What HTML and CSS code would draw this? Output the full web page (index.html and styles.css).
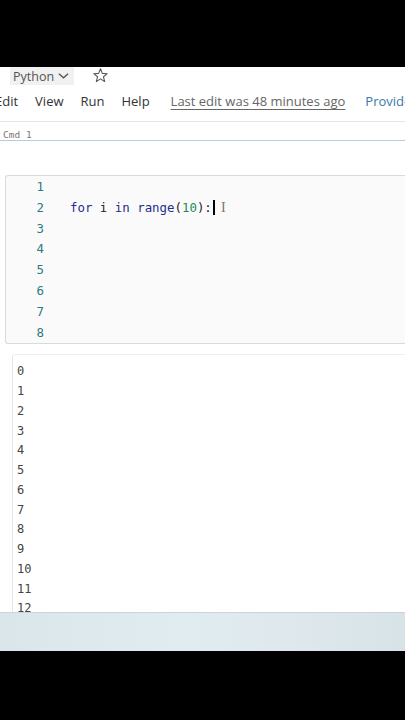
FILE: index.html
```html
<!DOCTYPE html>
<html lang="en">

<head>
    <meta charset="UTF-8">
    <meta name="viewport" content="width=device-width, initial-scale=1.0">
    <title>Notebook</title>
    <link rel="stylesheet" href="styles.css">
</head>

<body>

    <div class="screen">

        <div class="app">

            <div class="title-row">
                <span class="lang-pill">Python
                    <svg class="chevron" viewBox="0 0 12 8" width="11" height="8">
                        <path d="M1 1.5 L6 6 L11 1.5" fill="none" stroke="#555" stroke-width="1.4" />
                    </svg>
                </span>
                <svg class="star" viewBox="0 0 24 24" width="17" height="17">
                    <path d="M12 2.5 L14.6 9 L21.5 9.4 L16.2 13.8 L17.9 20.6 L12 16.8 L6.1 20.6 L7.8 13.8 L2.5 9.4 L9.4 9 Z"
                        fill="none" stroke="#555" stroke-width="1.5" stroke-linejoin="round" />
                </svg>
            </div>

            <div class="menu-row">
                <span class="menu-item edit">Edit</span>
                <span class="menu-item">View</span>
                <span class="menu-item">Run</span>
                <span class="menu-item">Help</span>
                <span class="last-edit">Last edit was 48 minutes ago</span>
                <span class="provider">Provide feedback</span>
            </div>

            <div class="cmd-row">Cmd 1</div>

            <div class="editor">
                <div class="line"><span class="num">1</span><span class="code"></span></div>
                <div class="line"><span class="num">2</span><span class="code"><span class="kw">for</span> i <span class="kw">in</span> <span class="kw">range</span>(<span class="nr">10</span>):<span class="caret"></span><span class="ibeam">I</span></span></div>
                <div class="line"><span class="num">3</span><span class="code"></span></div>
                <div class="line"><span class="num">4</span><span class="code"></span></div>
                <div class="line"><span class="num">5</span><span class="code"></span></div>
                <div class="line"><span class="num">6</span><span class="code"></span></div>
                <div class="line"><span class="num">7</span><span class="code"></span></div>
                <div class="line"><span class="num">8</span><span class="code"></span></div>
            </div>

            <div class="output">
                <div>0</div>
                <div>1</div>
                <div>2</div>
                <div>3</div>
                <div>4</div>
                <div>5</div>
                <div>6</div>
                <div>7</div>
                <div>8</div>
                <div>9</div>
                <div>10</div>
                <div>11</div>
                <div>12</div>
            </div>

        </div>

        <div class="bottom-bar"></div>

    </div>

</body>

</html>
```

FILE: styles.css
```css
html,
body {
    margin: 0;
    padding: 0;
    height: 100%;
    background: #000;
    font-family: "Open Sans", "Noto Sans", sans-serif;
    overflow: hidden;
}

.screen {
    display: flex;
    flex-direction: column;
    width: 405px;
    height: 720px;
    padding-top: 67px;
    box-sizing: border-box;
}

.app {
    height: 545px;
    background: #fff;
    overflow: hidden;
    display: flex;
    flex-direction: column;
    flex-shrink: 0;
}

.title-row {
    display: flex;
    align-items: center;
    height: 18px;
    padding-left: 10px;
    gap: 18px;
    flex-shrink: 0;
}

.lang-pill {
    display: flex;
    align-items: center;
    gap: 4px;
    height: 18px;
    padding: 0 5px 0 3px;
    background: #f1f1f1;
    color: #555;
    font-size: 12.5px;
}

.star {
    margin-top: -1px;
}

.menu-row {
    display: flex;
    align-items: flex-start;
    height: 37px;
    padding-top: 5px;
    box-sizing: border-box;
    line-height: 22px;
    white-space: nowrap;
    font-size: 13px;
    color: #333;
    border-bottom: 1px solid #e4e4e4;
    flex-shrink: 0;
}

.menu-item {
    margin-right: 17px;
}

.menu-item.edit {
    margin-left: -5px;
}

.last-edit {
    margin-left: 4px;
    color: #666;
    text-decoration: underline;
    text-underline-offset: 3px;
}

.provider {
    margin-left: 20px;
    color: #3a78a8;
}

.cmd-row {
    height: 19px;
    padding: 7px 0 0 3px;
    box-sizing: border-box;
    font-family: "DejaVu Sans Mono", monospace;
    font-size: 9.5px;
    line-height: 12px;
    color: #777;
    border-bottom: 1px solid #b9cbd4;
    flex-shrink: 0;
}

.editor {
    margin: 34px 0 0 5px;
    padding-top: 1px;
    background: #fafafa;
    border: 1px solid #dadada;
    border-right: none;
    border-radius: 3px 0 0 3px;
    font-family: "DejaVu Sans Mono", monospace;
    font-size: 12.4px;
    flex-shrink: 0;
}

.line {
    display: flex;
    height: 20.8px;
    line-height: 20.8px;
}

.num {
    width: 38px;
    text-align: right;
    color: #2d7b7e;
}

.code {
    position: relative;
    padding-left: 26px;
    color: #222;
}

.kw {
    color: #1f2d8f;
}

.nr {
    color: #1a8a5a;
}

.caret {
    display: inline-block;
    width: 2px;
    height: 15px;
    margin-left: 1px;
    vertical-align: -3px;
    background: #000;
}

.ibeam {
    position: absolute;
    left: 177px;
    top: 0;
    font-family: "Liberation Serif", serif;
    font-size: 14px;
    color: #777;
}

.output {
    margin: 10px 0 0 12px;
    padding: 7px 0 0 4px;
    border-left: 1px solid #e6e6e6;
    border-top: 1px solid #eeeeee;
    border-radius: 4px 0 0 0;
    font-family: "DejaVu Sans Mono", monospace;
    font-size: 12px;
    line-height: 19.75px;
    color: #444;
    flex-shrink: 0;
}

.bottom-bar {
    height: 39px;
    background: linear-gradient(90deg, #dbe6ea 0%, #e1ecf0 45%, #dfe9ed 70%, #d8e3e7 100%);
    border-top: 1px solid #c9d5d9;
    box-sizing: border-box;
    flex-shrink: 0;
}
```
